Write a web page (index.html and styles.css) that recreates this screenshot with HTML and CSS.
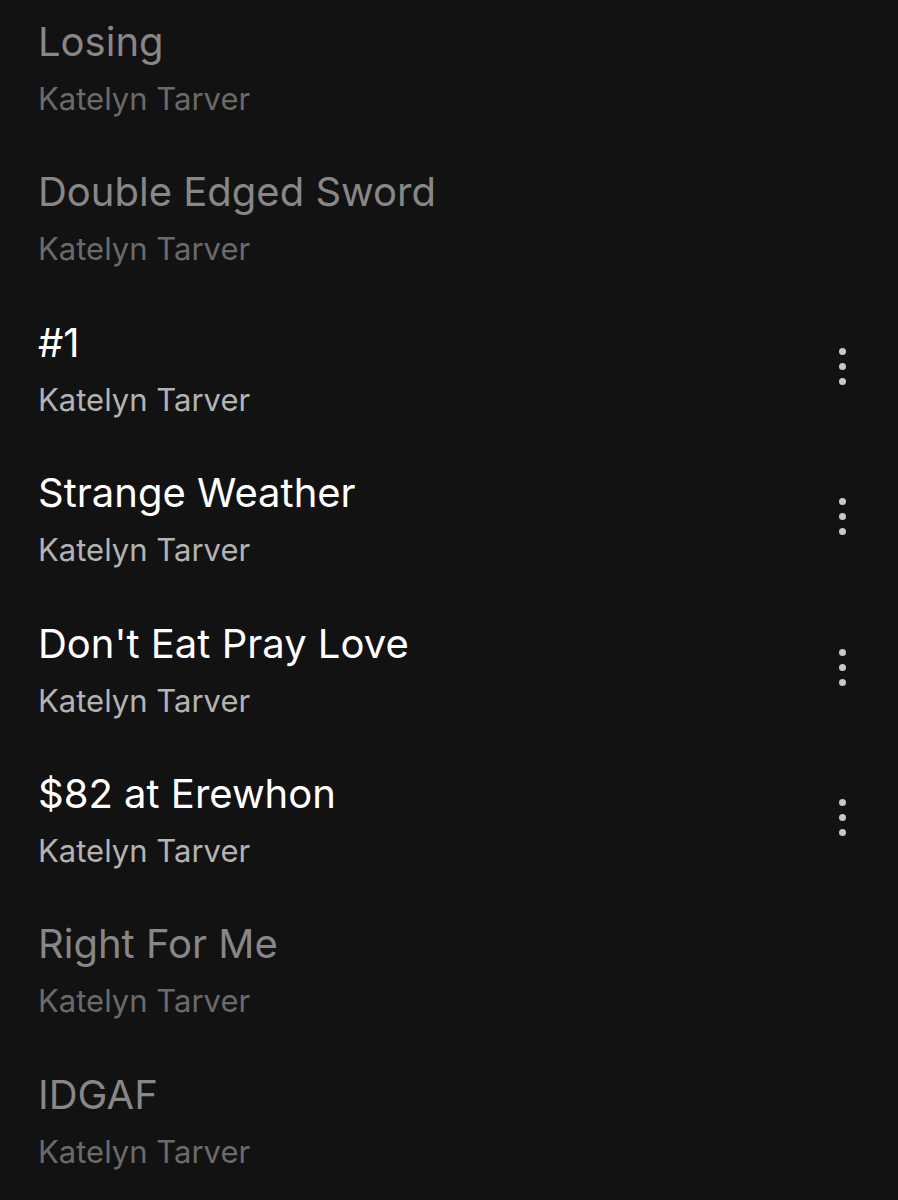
FILE: index.html
```html
<!DOCTYPE html>
<html>
<head>
<meta charset="utf-8">
<link rel="stylesheet" href="styles.css">
</head>
<body>
<ul class="list">
  <li class="row disabled"><div class="info"><div class="title">Losing</div><div class="artist">Katelyn Tarver</div></div></li>
  <li class="row disabled"><div class="info"><div class="title">Double Edged Sword</div><div class="artist">Katelyn Tarver</div></div></li>
  <li class="row"><div class="info"><div class="title">#1</div><div class="artist">Katelyn Tarver</div></div><button class="more"><span></span><span></span><span></span></button></li>
  <li class="row"><div class="info"><div class="title">Strange Weather</div><div class="artist">Katelyn Tarver</div></div><button class="more"><span></span><span></span><span></span></button></li>
  <li class="row"><div class="info"><div class="title">Don't Eat Pray Love</div><div class="artist">Katelyn Tarver</div></div><button class="more"><span></span><span></span><span></span></button></li>
  <li class="row"><div class="info"><div class="title">$82 at Erewhon</div><div class="artist">Katelyn Tarver</div></div><button class="more"><span></span><span></span><span></span></button></li>
  <li class="row disabled"><div class="info"><div class="title">Right For Me</div><div class="artist">Katelyn Tarver</div></div></li>
  <li class="row disabled"><div class="info"><div class="title">IDGAF</div><div class="artist">Katelyn Tarver</div></div></li>
</ul>
</body>
</html>
```
FILE: styles.css
```css
html, body {
  margin: 0;
  padding: 0;
  background: #121212;
}
body {
  font-family: "Inter", "Liberation Sans", sans-serif;
  width: 898px;
  height: 1200px;
  overflow: hidden;
}
.list {
  list-style: none;
  margin: 0;
  padding: 0 0 0 38px;
}
.row {
  height: 150.4px;
  display: flex;
  align-items: flex-start;
  justify-content: space-between;
  box-sizing: border-box;
  padding-top: 17px;
}
.info {
  display: flex;
  flex-direction: column;
}
.title {
  font-size: 40px;
  line-height: 50px;
  color: #ffffff;
}
.artist {
  font-size: 31px;
  line-height: 40px;
  color: #b3b3b3;
  margin-top: 12px;
}
.disabled .title { color: #878787; }
.disabled .artist { color: #6a6a6a; }
.more {
  background: none;
  border: 0;
  padding: 0;
  margin: 30px 52px 0 0;
  width: 8px;
  display: flex;
  flex-direction: column;
  gap: 8px;
  align-items: center;
}
.more span {
  width: 7px;
  height: 7px;
  border-radius: 50%;
  background: #c8c8c8;
  display: block;
}
```
